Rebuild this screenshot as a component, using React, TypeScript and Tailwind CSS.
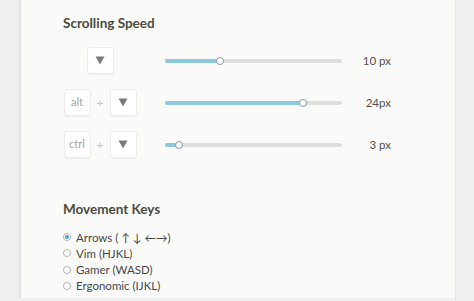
import { useState } from 'react'

type SpeedRow = { mods: string[]; value: number; max: number; label: string }

const rows: SpeedRow[] = [
  { mods: [], value: 31, max: 100, label: '10 px' },
  { mods: ['alt'], value: 78, max: 100, label: '24px' },
  { mods: ['ctrl'], value: 8, max: 100, label: '3 px' },
]

const movement = ['Arrows ( ↑ ↓ ←→)', 'Vim (HJKL)', 'Gamer (WASD)', 'Ergonomic (IJKL)']

function Key({ children }: { children: React.ReactNode }) {
  return (
    <div className="flex h-[27px] w-[27px] items-center justify-center rounded-[3px] border border-[#ececec] bg-white text-[11px] text-[#a3a3a3] shadow-[0_1px_1px_rgba(0,0,0,0.06)]">
      {children}
    </div>
  )
}

function Arrow() {
  return (
    <svg width="10" height="9" viewBox="0 0 10 9">
      <path d="M0.5 0.5 H9.5 L5 8.5 Z" fill="#7a7a7a" />
    </svg>
  )
}

function Slider({ value, max }: { value: number; max: number }) {
  const pct = (value / max) * 100
  return (
    <div className="relative h-[4px] w-[177px] rounded-full bg-[#dedede]">
      <div className="h-full rounded-full bg-[#8ec8de]" style={{ width: `${pct}%` }} />
      <div
        className="absolute top-1/2 h-[8px] w-[8px] -translate-x-1/2 -translate-y-1/2 rounded-full border-[1.5px] border-[#8a9aa0] bg-white"
        style={{ left: `${pct}%` }}
      />
    </div>
  )
}

export default function App() {
  const [mode, setMode] = useState(0)
  return (
    <div
      className="flex h-[301px] w-[474px] overflow-hidden bg-[#eeeeee]"
      style={{ fontFamily: 'Lato, "Open Sans", sans-serif' }}
    >
      <div className="w-[19px] shrink-0 bg-[#efefef]" />
      <div className="h-[298px] w-[436px] shrink-0 border-l-2 border-[#e3e3e3] bg-[#fafaf9] pl-[42px] pt-[14px]">
        <h2 className="text-[13.5px] leading-[18px] font-bold text-[#4b4a3e]">Scrolling Speed</h2>
        <div className="mt-[15px] flex flex-col gap-[15px]">
          {rows.map((r) => (
            <div key={r.label} className="flex h-[27px] items-center">
              <div className="flex w-[74px] shrink-0 items-center justify-center">
                {r.mods.map((m) => (
                  <div key={m} className="flex items-center">
                    <Key>{m}</Key>
                    <span className="w-[19px] text-center text-[12px] text-[#c4c4c4]">+</span>
                  </div>
                ))}
                <Key>
                  <Arrow />
                </Key>
              </div>
              <div className="ml-[28px]">
                <Slider value={r.value} max={r.max} />
              </div>
              <div className="w-[49px] text-right text-[11.5px] text-[#505050]">{r.label}</div>
            </div>
          ))}
        </div>
        <h2 className="mt-[42px] text-[13.5px] leading-[18px] font-bold text-[#4b4a3e]">Movement Keys</h2>
        <div className="mt-[11px] flex flex-col">
          {movement.map((m, i) => (
            <label
              key={m}
              className="flex h-[16.3px] cursor-pointer items-center gap-[5px] text-[11.5px] text-[#474747]"
              onClick={() => setMode(i)}
            >
              <span className="flex h-[8px] w-[8px] items-center justify-center rounded-full border border-[#b5b5b5] bg-white">
                {mode === i && <span className="h-[4px] w-[4px] rounded-full bg-[#4aa3d6]" />}
              </span>
              <span>{m}</span>
            </label>
          ))}
        </div>
      </div>
      <div className="flex-1 border-l border-[#e6e6e6] bg-[#efefef]" />
    </div>
  )
}
